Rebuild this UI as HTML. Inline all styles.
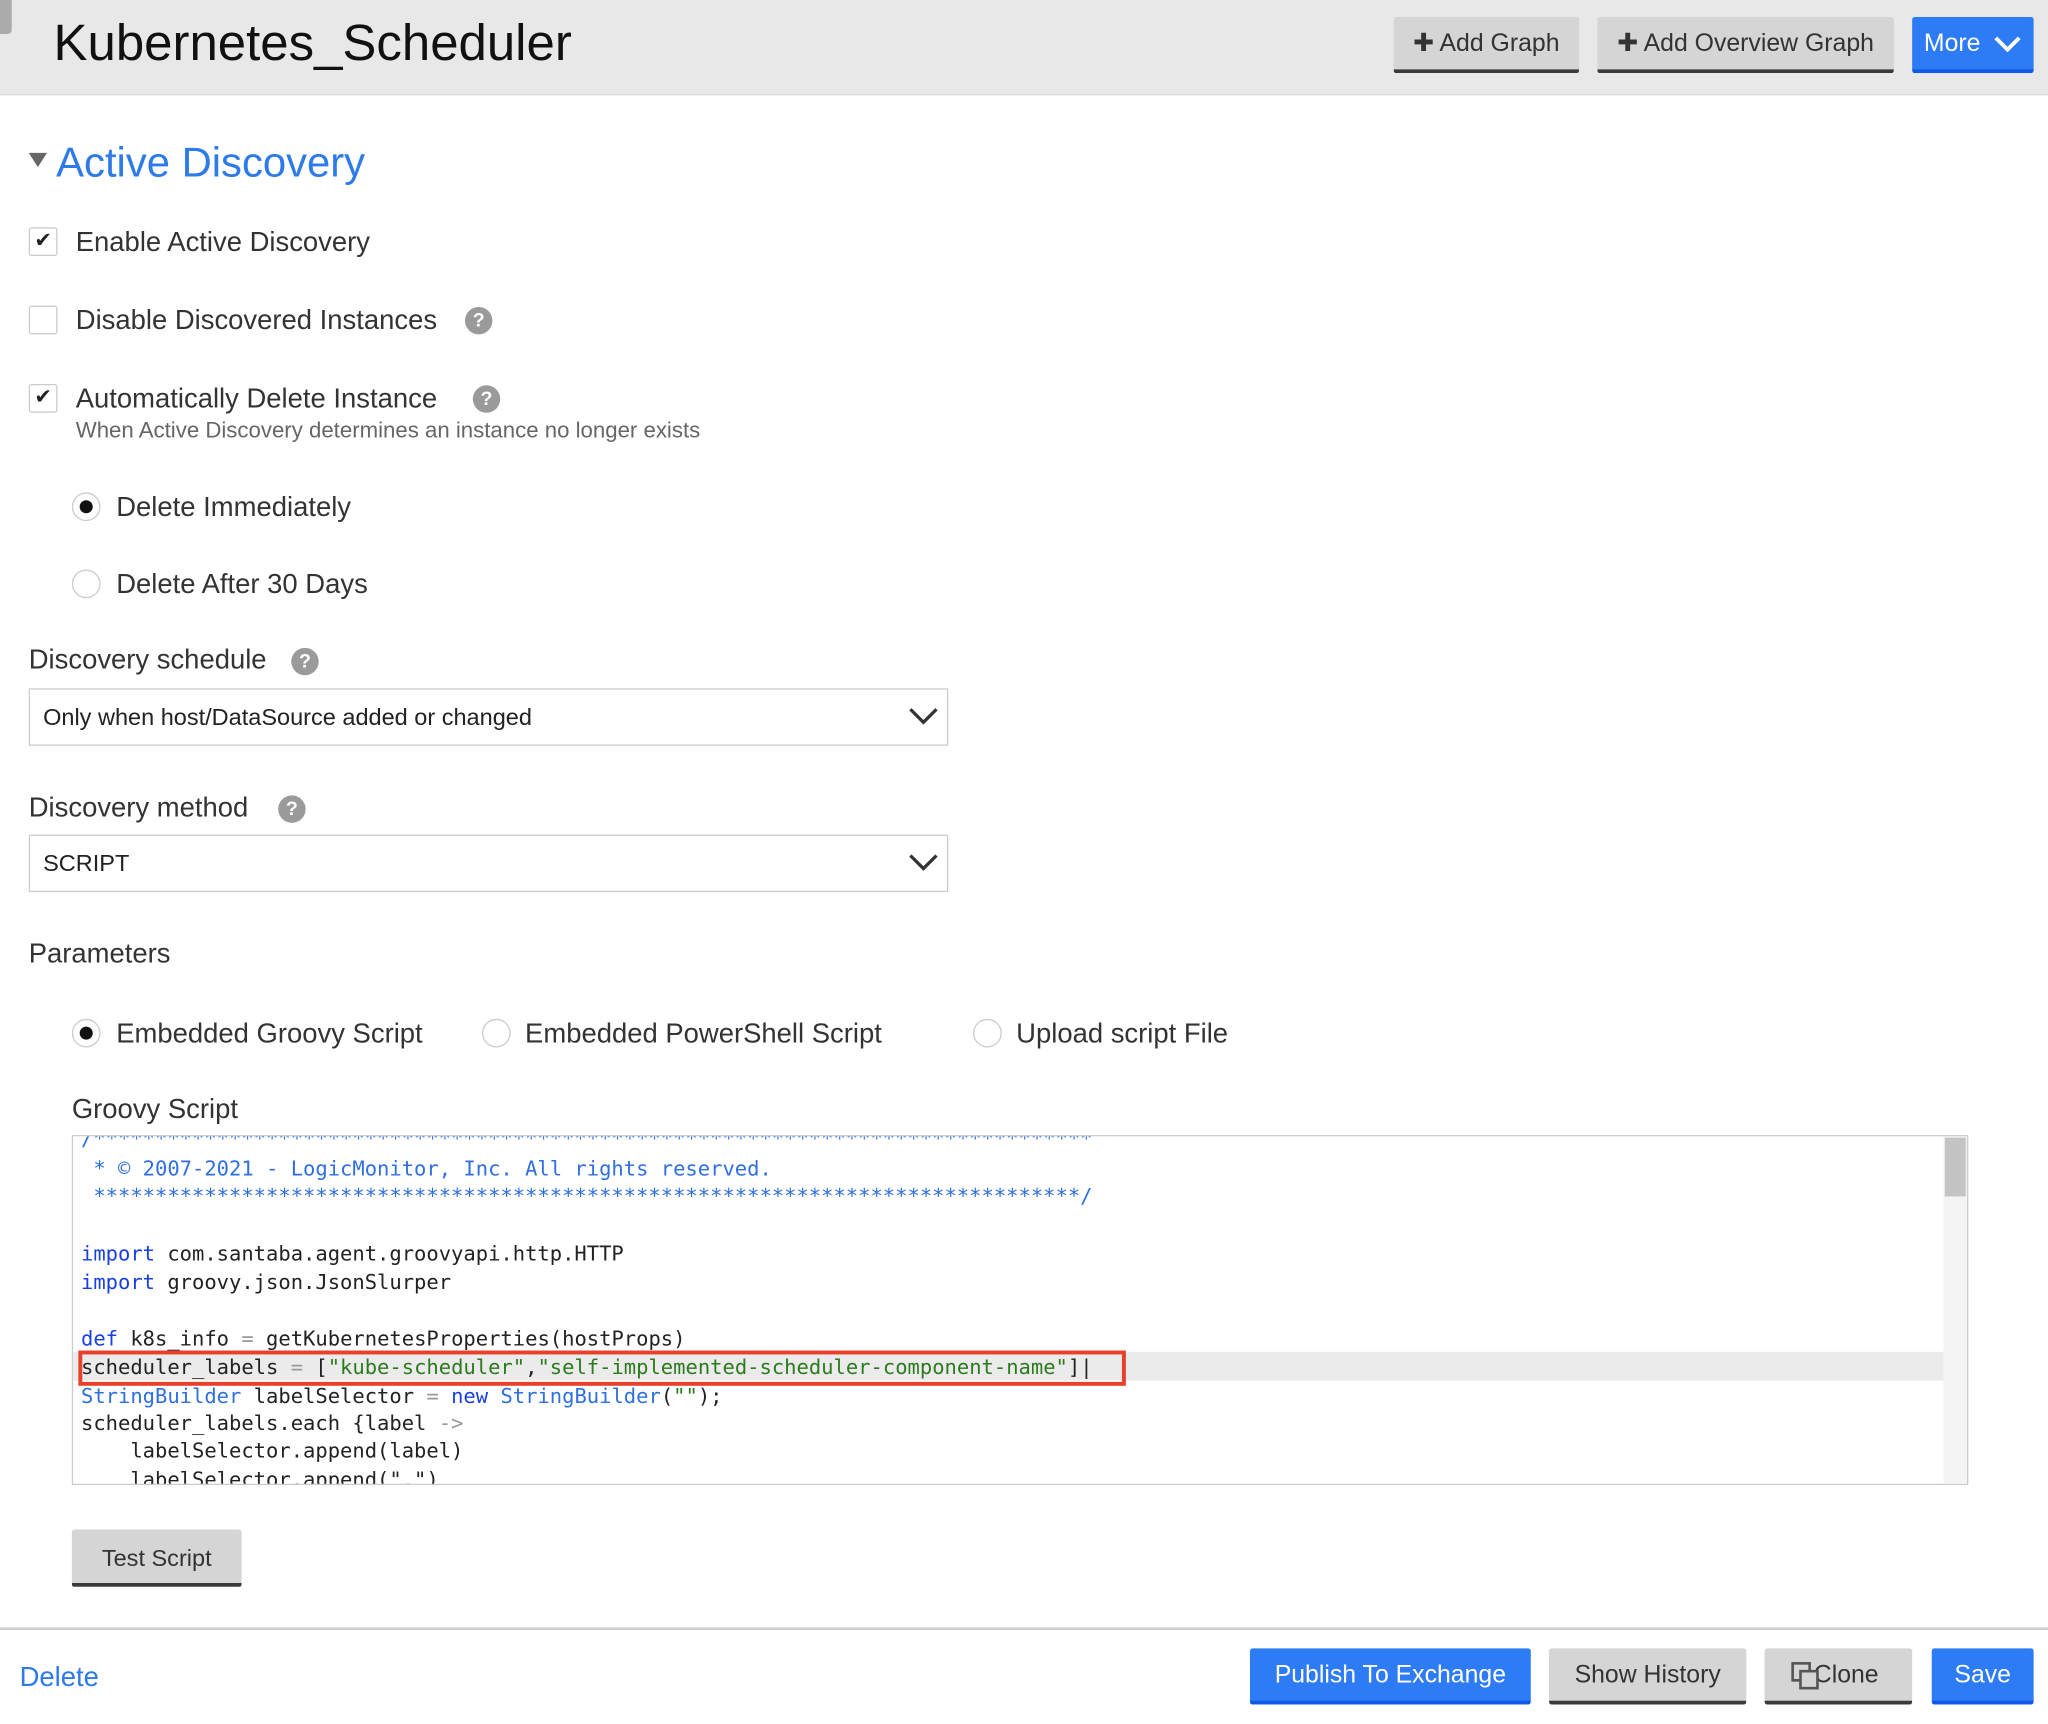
<!DOCTYPE html>
<html><head><meta charset="utf-8"><style>
html,body{margin:0;padding:0;width:2048px;height:1723px;overflow:hidden;background:#fff}
#w{position:absolute;left:0;top:0;width:1568px;height:1320px;transform:scale(1.30612);transform-origin:0 0;font-family:"Liberation Sans",sans-serif;color:#333}
.a{position:absolute;white-space:nowrap}
.hdr{position:absolute;left:0;top:0;width:1568px;height:72px;background:#e8e8e8;border-bottom:1px solid #ddd}
.btn{position:absolute;height:40px;border-radius:2px;box-sizing:border-box;font-size:19px;line-height:42px;text-align:center;white-space:nowrap}
.g{background:#d5d5d5;border-bottom:3px solid #3a3a3a;color:#333}
.b{background:#2d7bf5;border-bottom:3px solid #0d5ae8;color:#fff}
.cb{position:absolute;width:22px;height:22px;border:1px solid #ccc;border-radius:2px;background:#fff;box-sizing:border-box;font-size:16px;line-height:20px;text-align:center;color:#222}
.rd{position:absolute;width:22px;height:22px;border:1px solid #ccc;border-radius:50%;box-sizing:border-box;background:#fff}
.rd.on::after{content:"";position:absolute;left:5px;top:5px;width:10px;height:10px;border-radius:50%;background:#111}
.t{font-size:21px;color:#333;margin-top:2px}
.h{position:absolute;width:21px;height:21px;border-radius:50%;background:#9a9a9a;color:#fff;font-size:15px;font-weight:bold;text-align:center;line-height:21px}
.sel{position:absolute;left:22px;width:704px;height:44px;border:1px solid #ccc;box-sizing:border-box;font-size:18px;line-height:42px;padding-left:10px;color:#222}
.sel svg{position:absolute;right:6px;top:12px}
.code{position:absolute;left:55px;top:869px;width:1452px;height:268px;border:1px solid #ccc;box-sizing:border-box;overflow:hidden;font-family:"DejaVu Sans Mono","Liberation Mono",monospace;font-size:15.7px;color:#222}
.ln{position:absolute;left:6px;white-space:pre;line-height:22px}
.k{color:#1a3fe0}.c{color:#2f6fe0}.s{color:#2c7a1e}.o{color:#999}
</style></head><body><div id="w">
<div class="hdr"></div>
<div class="a" style="left:0;top:0;width:9px;height:26px;background:#aaa;border-radius:0 0 3px 0"></div>
<div class="a" style="left:41px;top:12px;font-size:39px;color:#111">Kubernetes_Scheduler</div>
<div class="btn g" style="left:1067px;top:13px;width:142px;height:43px">✚ Add Graph</div>
<div class="btn g" style="left:1223px;top:13px;width:227px;height:43px">✚ Add Overview Graph</div>
<div class="btn b" style="left:1464px;top:13px;width:93px;height:43px;text-align:left;padding-left:9px">More <svg width="22" height="14" viewBox="0 0 22 14" style="position:absolute;right:9px;top:14px"><path d="M2 2l9 9 9-9" stroke="#fff" stroke-width="3" fill="none"/></svg></div>

<div class="a" style="left:22px;top:117px;width:0;height:0;border-left:7px solid transparent;border-right:7px solid transparent;border-top:11px solid #666"></div>
<div class="a" style="left:43px;top:106px;font-size:32px;color:#2d7be9">Active Discovery</div>

<div class="cb" style="left:22px;top:174px">✔</div><div class="a t" style="left:58px;top:172px">Enable Active Discovery</div>
<div class="cb" style="left:22px;top:234px"></div><div class="a t" style="left:58px;top:232px">Disable Discovered Instances</div><div class="h" style="left:356px;top:235px">?</div>
<div class="cb" style="left:22px;top:294px">✔</div><div class="a t" style="left:58px;top:292px">Automatically Delete Instance</div><div class="h" style="left:362px;top:295px">?</div>
<div class="a" style="left:58px;top:320px;font-size:17px;color:#666">When Active Discovery determines an instance no longer exists</div>

<div class="rd on" style="left:55px;top:377px"></div><div class="a t" style="left:89px;top:375px">Delete Immediately</div>
<div class="rd" style="left:55px;top:436px"></div><div class="a t" style="left:89px;top:434px">Delete After 30 Days</div>

<div class="a t" style="left:22px;top:492px">Discovery schedule</div><div class="h" style="left:223px;top:496px">?</div>
<div class="sel" style="top:527px">Only when host/DataSource added or changed<svg width="24" height="16" viewBox="0 0 24 16"><path d="M2 3l10 10 10-10" stroke="#333" stroke-width="2.5" fill="none"/></svg></div>
<div class="a t" style="left:22px;top:605px">Discovery method</div><div class="h" style="left:213px;top:609px">?</div>
<div class="sel" style="top:639px">SCRIPT<svg width="24" height="16" viewBox="0 0 24 16"><path d="M2 3l10 10 10-10" stroke="#333" stroke-width="2.5" fill="none"/></svg></div>

<div class="a t" style="left:22px;top:717px">Parameters</div>
<div class="rd on" style="left:55px;top:780px"></div><div class="a t" style="left:89px;top:778px">Embedded Groovy Script</div>
<div class="rd" style="left:369px;top:780px"></div><div class="a t" style="left:402px;top:778px">Embedded PowerShell Script</div>
<div class="rd" style="left:745px;top:780px"></div><div class="a t" style="left:778px;top:778px">Upload script File</div>

<div class="a t" style="left:55px;top:836px">Groovy Script</div>
<div class="code">
<div class="a" style="left:0;top:165px;width:1433px;height:22px;background:#ebebeb"></div>
<div class="a" style="right:0;top:0;width:18px;height:268px;background:#f4f4f4"></div>
<div class="a" style="right:1px;top:1px;width:16px;height:45px;background:#c4c4c4"></div>
<div class="ln c" style="top:-9px">/*********************************************************************************</div>
<div class="ln c" style="top:14px"> * © 2007-2021 - LogicMonitor, Inc. All rights reserved.</div>
<div class="ln c" style="top:35px"> ********************************************************************************/</div>
<div class="ln" style="top:79px"><span class="k">import</span> com.santaba.agent.groovyapi.http.HTTP</div>
<div class="ln" style="top:101px"><span class="k">import</span> groovy.json.JsonSlurper</div>
<div class="ln" style="top:144px"><span class="k">def</span> k8s_info <span class="o">=</span> getKubernetesProperties(hostProps)</div>
<div class="ln" style="top:166px">scheduler_labels <span class="o">=</span> [<span class="s">"kube-scheduler"</span>,<span class="s">"self-implemented-scheduler-component-name"</span>]|</div>
<div class="ln" style="top:188px"><span class="c">StringBuilder</span> labelSelector <span class="o">=</span> <span class="k">new</span> <span class="c">StringBuilder</span>(<span class="s">""</span>);</div>
<div class="ln" style="top:209px">scheduler_labels.each {label <span class="o">-&gt;</span></div>
<div class="ln" style="top:230px">    labelSelector.append(label)</div>
<div class="ln" style="top:252px">    labelSelector.append(",")</div>
<div class="a" style="left:4px;top:164px;width:796px;height:21px;border:3px solid #e8402a"></div>
</div>

<div class="btn g" style="left:55px;top:1171px;width:130px;height:44px;font-size:18px;line-height:44px">Test Script</div>
<div class="a" style="left:0;top:1246px;width:1568px;height:2px;background:#d0d0d0"></div>
<div class="a" style="left:15px;top:1273px;font-size:21px;color:#2d7be9">Delete</div>
<div class="btn b" style="left:957px;top:1262px;width:215px;height:43px">Publish To Exchange</div>
<div class="btn g" style="left:1186px;top:1262px;width:151px;height:43px">Show History</div>
<div class="btn g" style="left:1351px;top:1262px;width:113px;height:43px;padding-left:12px"><svg width="22" height="22" viewBox="0 0 22 22" style="position:absolute;left:20px;top:10px"><rect x="1.5" y="1.5" width="13" height="13" fill="none" stroke="#555" stroke-width="2"/><rect x="7.5" y="7.5" width="13" height="13" fill="#d5d5d5" stroke="#555" stroke-width="2"/></svg>Clone</div>
<div class="btn b" style="left:1479px;top:1262px;width:78px;height:43px">Save</div>
</div></body></html>
